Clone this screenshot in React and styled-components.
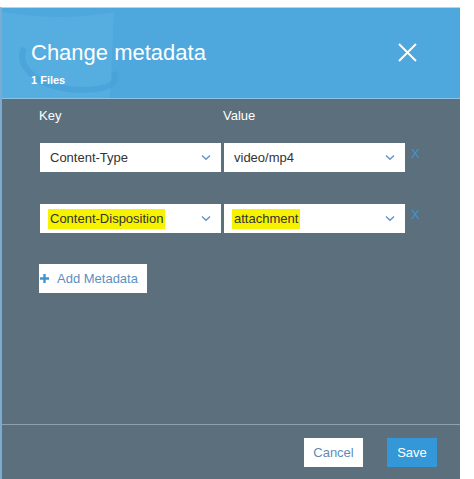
import styled, { createGlobalStyle } from "styled-components";

const Global = createGlobalStyle`
  html, body { margin: 0; padding: 0; background: #fff; }
  body { font-family: "Liberation Sans", Arial, sans-serif; }
`;

const Page = styled.div`
  width: 474px;
  height: 479px;
  overflow: hidden;
  background: #fff;
  padding-top: 7px;
  box-sizing: border-box;
`;

const Dialog = styled.div`
  width: 460px;
  height: 472px;
  display: flex;
  flex-direction: column;
  border-top: 1px solid #c9cfd3;
  border-left: 2px solid #79acd0;
  box-sizing: border-box;
  background: #5b6f7c;
`;

const Header = styled.div`
  position: relative;
  height: 91px;
  background: #4fa8dd;
  border-bottom: 1px solid #8cc3e4;
  padding: 0 43px 0 29px;
  display: flex;
  align-items: center;
  justify-content: space-between;
  overflow: hidden;
  box-sizing: border-box;
`;

const Deco = styled.svg`
  position: absolute;
  left: 0;
  top: 0;
  pointer-events: none;
`;

const TitleBox = styled.div`
  position: relative;
  display: flex;
  flex-direction: column;
  gap: 9px;
  padding-top: 20px;
`;

const Title = styled.div`
  color: #fff;
  font-size: 22px;
  line-height: 24px;
`;

const Sub = styled.div`
  color: #fff;
  font-size: 11px;
  font-weight: 600;
  line-height: 12px;
`;

const Close = styled.button`
  position: relative;
  background: none;
  border: none;
  padding: 0;
  width: 19px;
  height: 19px;
  margin-top: -2px;
  cursor: pointer;
`;

const Body = styled.div`
  flex: 1;
  padding: 9px 0 0 36px;
  display: flex;
  flex-direction: column;
  border-bottom: 1px solid #8ea1ad;
`;

const Labels = styled.div`
  display: grid;
  grid-template-columns: 184px 184px;
  color: #fff;
  font-size: 13px;
  line-height: 15px;
  padding-left: 1px;
  margin-bottom: 20px;
`;

const Rows = styled.div`
  display: flex;
  flex-direction: column;
  gap: 32px;
`;

const Row = styled.div`
  display: flex;
  align-items: center;
  gap: 3px;
  padding-left: 2px;
`;

const Select = styled.div`
  width: 181px;
  height: 29px;
  background: #fff;
  box-sizing: border-box;
  display: flex;
  align-items: center;
  justify-content: space-between;
  padding: 0 10px 0 8px;
  color: #333;
  font-size: 13px;
`;

const Text = styled.span`
  padding: 2px 2px 3px;
  background: ${(p) => (p.$mark ? "#f6f200" : "transparent")};
`;

const Remove = styled.span`
  color: #3f94d2;
  font-size: 13px;
  margin: -8px 0 0 3px;
`;

const AddButton = styled.button`
  align-self: flex-start;
  margin-top: 31px;
  margin-left: 1px;
  height: 29px;
  width: 108px;
  background: #fff;
  border: none;
  padding: 0 0 0 1px;
  display: flex;
  align-items: center;
  gap: 8px;
  color: #5b8fc2;
  font-family: "Liberation Sans", Arial, sans-serif;
  font-size: 13px;
  cursor: pointer;
`;

const Footer = styled.div`
  height: 54px;
  display: flex;
  justify-content: flex-end;
  align-items: flex-start;
  gap: 24px;
  padding: 13px 23px 0 0;
  box-sizing: border-box;
`;

const Btn = styled.button`
  height: 29px;
  border: none;
  padding: 0;
  width: ${(p) => p.$w}px;
  background: ${(p) => (p.$primary ? "#3498d8" : "#fff")};
  color: ${(p) => (p.$primary ? "#fff" : "#5f8cb6")};
  font-family: "Liberation Sans", Arial, sans-serif;
  font-size: 13px;
  cursor: pointer;
`;

function Chevron() {
  return (
    <svg width="10" height="7" viewBox="0 0 10 7">
      <path d="M1 1.5 L5 5.2 L9 1.5" fill="none" stroke="#5f94c4" strokeWidth="1.4" />
    </svg>
  );
}

function Plus() {
  return (
    <svg width="9" height="9" viewBox="0 0 9 9">
      <path d="M4.5 0 V9 M0 4.5 H9" stroke="#3f94d2" strokeWidth="2.4" />
    </svg>
  );
}

const rows = [
  { key: "Content-Type", value: "video/mp4" },
  { key: "Content-Disposition", value: "attachment", mark: true },
];

export default function App() {
  return (
    <>
      <Global />
      <Page>
        <Dialog>
          <Header>
            <Deco width="140" height="91" viewBox="0 0 140 91">
              <path d="M0 4 Q60 14 112 4 L108 91 L0 91 Z" fill="#5cb0e1" opacity="0.55" />
              <path d="M22 40 Q14 58 40 74 Q70 86 100 80 Q118 76 112 64"
                fill="none" stroke="#45a0d6" strokeWidth="6" opacity="0.6" />
            </Deco>
            <TitleBox>
              <Title>Change metadata</Title>
              <Sub>1 Files</Sub>
            </TitleBox>
            <Close aria-label="close">
              <svg width="19" height="19" viewBox="0 0 19 19">
                <path d="M1 1 L18 18 M18 1 L1 18" stroke="#fff" strokeWidth="1.8" />
              </svg>
            </Close>
          </Header>
          <Body>
            <Labels>
              <span>Key</span>
              <span>Value</span>
            </Labels>
            <Rows>
              {rows.map((r) => (
                <Row key={r.key}>
                  <Select>
                    <Text $mark={r.mark}>{r.key}</Text>
                    <Chevron />
                  </Select>
                  <Select>
                    <Text $mark={r.mark}>{r.value}</Text>
                    <Chevron />
                  </Select>
                  <Remove>X</Remove>
                </Row>
              ))}
            </Rows>
            <AddButton>
              <Plus />
              Add Metadata
            </AddButton>
          </Body>
          <Footer>
            <Btn $w={59}>Cancel</Btn>
            <Btn $w={50} $primary>Save</Btn>
          </Footer>
        </Dialog>
      </Page>
    </>
  );
}
